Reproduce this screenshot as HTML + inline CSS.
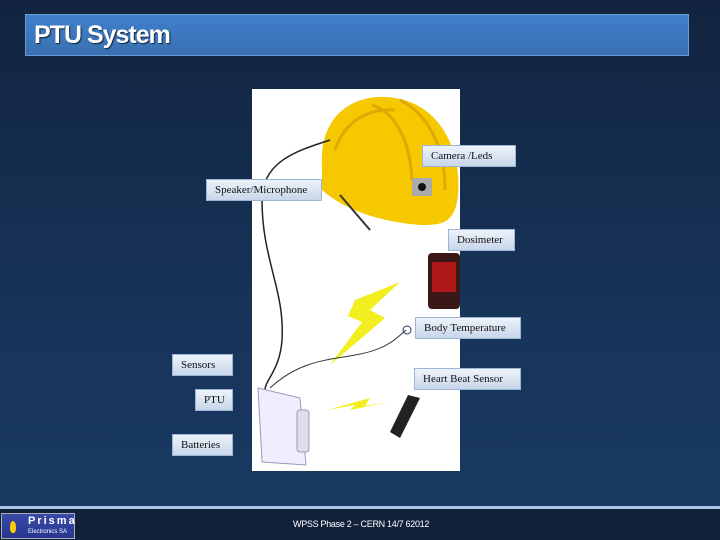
<!DOCTYPE html>
<html><head><style>
body{margin:0;width:720px;height:540px;overflow:hidden;background:linear-gradient(#12243f 0%,#17345a 60%,#1a3a62 100%);position:relative;font-family:"Liberation Serif",serif}
.t{position:absolute;left:25px;top:14px;width:664px;height:42px;background:linear-gradient(#407fcc,#3a70b2);border:1px solid #6a9ad6;box-sizing:border-box}
.t span{position:absolute;left:8px;top:6px;font:bold 25px "Liberation Sans",sans-serif;color:#fff;letter-spacing:-1px;text-shadow:1px 1px 1px #123}
.img{position:absolute;left:252px;top:89px;width:208px;height:382px;background:#fff}
.l{position:absolute;height:22px;background:linear-gradient(#eef3fa,#c7d6ea);border:1px solid #9db5d6;box-sizing:border-box;font-size:11px;line-height:21px;padding-left:8px;color:#111;white-space:nowrap}
.f{position:absolute;left:0;top:506px;width:720px;height:34px;background:#12213a;border-top:3px solid #a9c8ee;box-sizing:border-box}
</style></head><body>
<div class="t"><span>PTU System</span></div>
<div class="img"></div>
<svg style="position:absolute;left:0;top:0" width="720" height="540">
<path d="M322 168 C318 110 360 92 395 98 C440 105 462 150 458 195 C455 225 440 225 420 225 C380 222 345 210 322 190Z" fill="#f6c800"/>
<path d="M335 150 C345 120 370 108 395 110 M372 105 C395 112 410 140 412 180 M400 100 C430 115 445 150 445 190" stroke="#e0a800" stroke-width="3" fill="none"/>
<rect x="412" y="178" width="20" height="18" fill="#aaa"/><circle cx="422" cy="187" r="4" fill="#111"/>
<path d="M330 140 C300 150 262 160 262 200 C262 260 285 290 282 340 C280 370 265 380 265 390" stroke="#222" stroke-width="1.5" fill="none"/>
<path d="M340 195 L370 230" stroke="#333" stroke-width="2"/>
<rect x="428" y="253" width="32" height="56" rx="4" fill="#3a1818"/><rect x="432" y="262" width="24" height="30" fill="#b01818"/>
<path d="M355 300 L400 282 L370 310 L385 318 L330 365 L362 322 L348 316Z" fill="#f2ee20"/>
<path d="M327 410 L370 398 L365 406 L390 402 L350 410 L355 405Z" fill="#f2ee20"/>
<path d="M270 388 C300 360 330 360 355 355 C385 350 395 340 406 330" stroke="#333" fill="none"/>
<circle cx="407" cy="330" r="4" fill="none" stroke="#336"/>
<path d="M390 432 L408 395 L420 398 L400 438Z" fill="#222"/>
<path d="M258 388 L300 398 L306 465 L262 462 Z" fill="#eef" stroke="#99b"/>
<rect x="297" y="410" width="12" height="42" rx="3" fill="#dde" stroke="#99b"/>
</svg>
<div class="l" style="left:422px;top:145px;width:94px">Camera /Leds</div>
<div class="l" style="left:206px;top:179px;width:116px">Speaker/Microphone</div>
<div class="l" style="left:448px;top:229px;width:67px">Dosimeter</div>
<div class="l" style="left:415px;top:317px;width:106px">Body Temperature</div>
<div class="l" style="left:172px;top:354px;width:61px">Sensors</div>
<div class="l" style="left:414px;top:368px;width:107px">Heart Beat Sensor</div>
<div class="l" style="left:195px;top:389px;width:38px">PTU</div>
<div class="l" style="left:172px;top:434px;width:61px">Batteries</div>
<div class="f">
<div style="position:absolute;left:1px;top:4px;width:74px;height:26px;background:linear-gradient(#3a4aa8,#283690);border:1px solid #aab;box-sizing:border-box">
<span style="position:absolute;left:26px;top:1px;color:#fff;font:bold 11px 'Liberation Sans',sans-serif;letter-spacing:2px">Prisma</span>
<span style="position:absolute;left:26px;top:15px;color:#fff;font:6px 'Liberation Sans',sans-serif">Electronics SA</span>
<span style="position:absolute;left:8px;top:7px;width:6px;height:12px;background:#fc0;border-radius:50% 50% 40% 40%"></span></div>
<div style="position:absolute;left:293px;top:10px;color:#fff;font:9px 'Liberation Sans',sans-serif;letter-spacing:-.3px">WPSS Phase 2 – CERN 14/7 62012</div>
</div>
</body></html>
